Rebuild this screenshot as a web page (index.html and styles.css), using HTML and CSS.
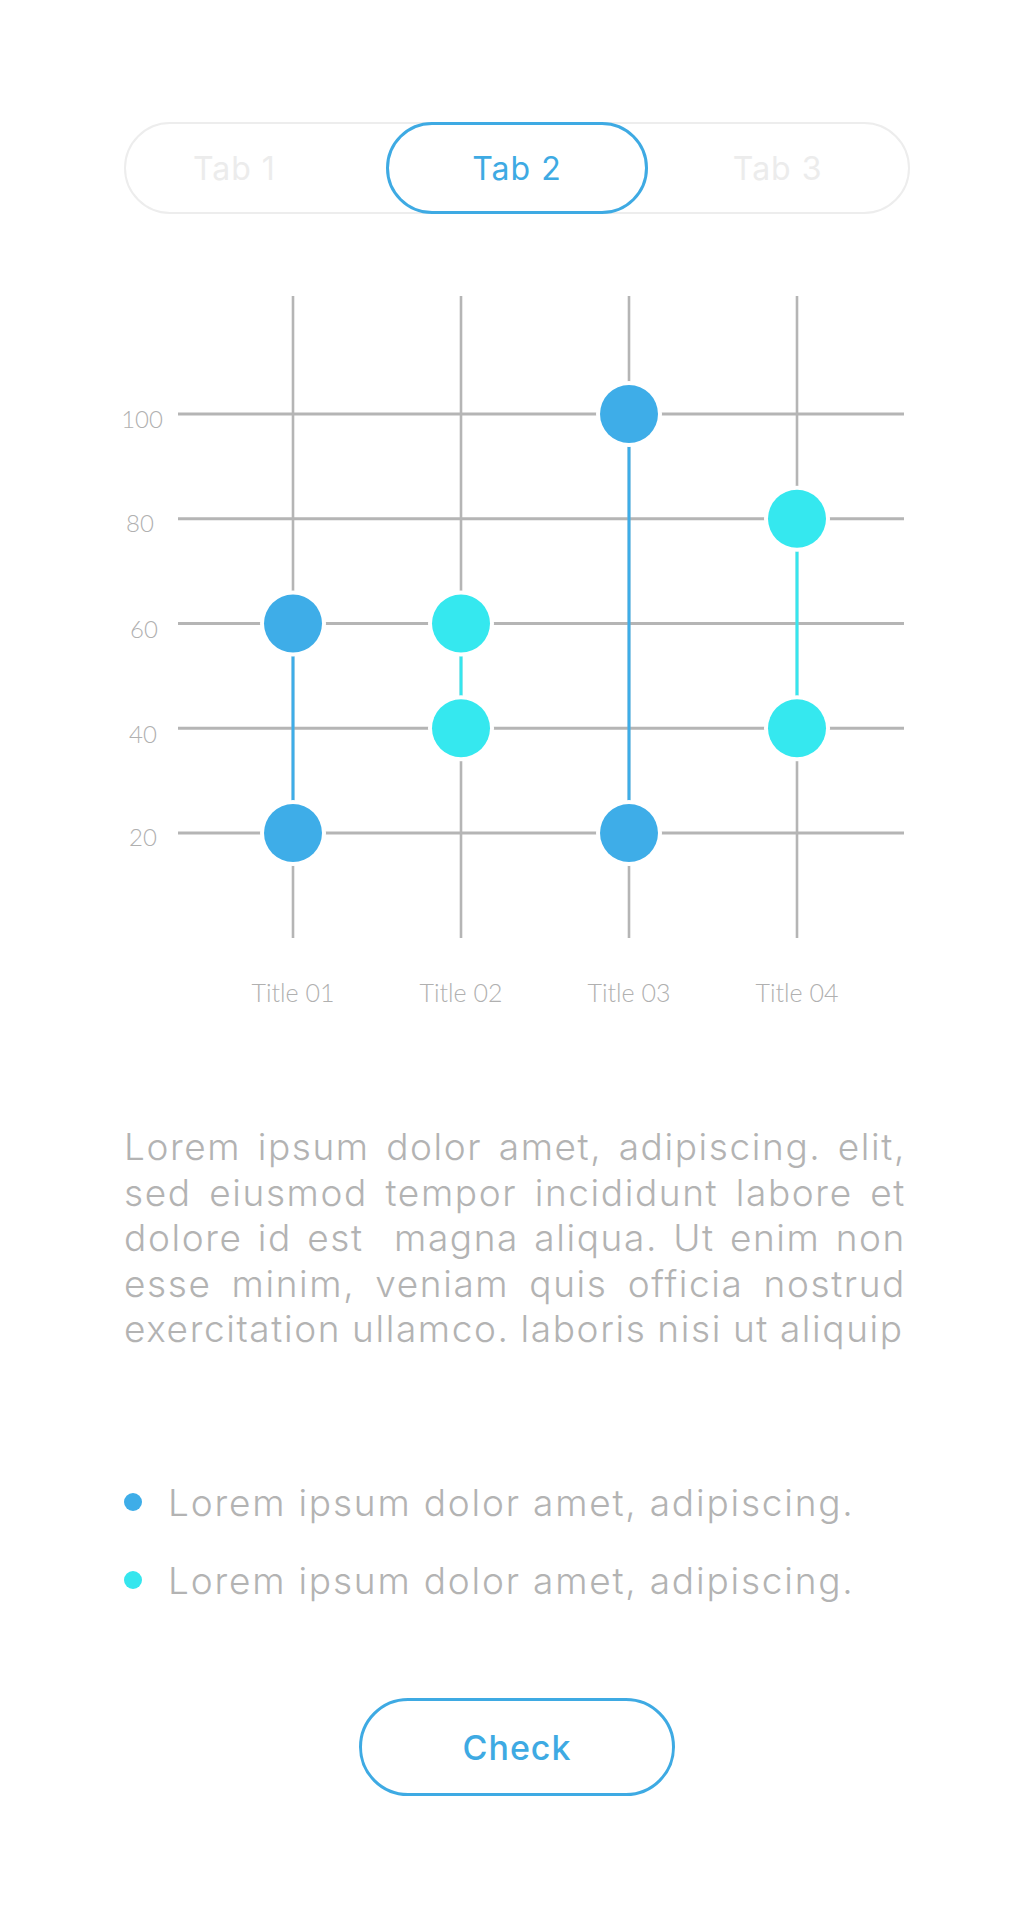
FILE: index.html
```html
<!DOCTYPE html>
<html lang="en">
<head>
<meta charset="utf-8">
<title>Tabs chart</title>
<link rel="stylesheet" href="styles.css">
</head>
<body>
<main class="screen">
  <nav class="tabs">
    <button class="tab tab--first">Tab 1</button>
    <button class="tab tab--active">Tab 2</button>
    <button class="tab">Tab 3</button>
  </nav>

  <svg class="chart" width="786" height="740" viewBox="0 0 786 740">
    <!-- horizontal grid lines -->
    <g class="grid-h">
      <line x1="54" y1="134" x2="780" y2="134"/>
      <line x1="54" y1="238.75" x2="780" y2="238.75"/>
      <line x1="54" y1="343.5" x2="780" y2="343.5"/>
      <line x1="54" y1="448.25" x2="780" y2="448.25"/>
      <line x1="54" y1="553" x2="780" y2="553"/>
    </g>
    <!-- vertical grid lines -->
    <g class="grid-v">
      <line x1="169" y1="16" x2="169" y2="658"/>
      <line x1="337" y1="16" x2="337" y2="658"/>
      <line x1="505" y1="16" x2="505" y2="658"/>
      <line x1="673" y1="16" x2="673" y2="658"/>
    </g>
    <!-- y axis -->
    <g class="axis-y">
      <text x="18" y="148">100</text>
      <text x="16" y="252">80</text>
      <text x="20" y="358">60</text>
      <text x="19" y="463">40</text>
      <text x="19" y="566">20</text>
    </g>
    <!-- x axis -->
    <g class="axis-x">
      <text x="169" y="722">Title 01</text>
      <text x="337" y="722">Title 02</text>
      <text x="505" y="722">Title 03</text>
      <text x="673" y="722">Title 04</text>
    </g>
    <!-- ranges -->
    <g class="range range--blue">
      <line x1="169" y1="343.5" x2="169" y2="553"/>
      <line x1="505" y1="134" x2="505" y2="553"/>
    </g>
    <g class="range range--cyan">
      <line x1="337" y1="343.5" x2="337" y2="448.25"/>
      <line x1="673" y1="238.75" x2="673" y2="448.25"/>
    </g>
    <!-- points -->
    <g class="halo">
      <circle cx="169" cy="343.5" r="33"/>
      <circle cx="169" cy="553" r="33"/>
      <circle cx="337" cy="343.5" r="33"/>
      <circle cx="337" cy="448.25" r="33"/>
      <circle cx="505" cy="134" r="33"/>
      <circle cx="505" cy="553" r="33"/>
      <circle cx="673" cy="238.75" r="33"/>
      <circle cx="673" cy="448.25" r="33"/>
    </g>
    <g class="dot dot--blue">
      <circle cx="169" cy="343.5" r="29"/>
      <circle cx="169" cy="553" r="29"/>
      <circle cx="505" cy="134" r="29"/>
      <circle cx="505" cy="553" r="29"/>
    </g>
    <g class="dot dot--cyan">
      <circle cx="337" cy="343.5" r="29"/>
      <circle cx="337" cy="448.25" r="29"/>
      <circle cx="673" cy="238.75" r="29"/>
      <circle cx="673" cy="448.25" r="29"/>
    </g>
  </svg>

  <p class="copy">Lorem ipsum dolor amet, adipiscing. elit, sed eiusmod tempor incididunt labore et dolore id est &nbsp;magna aliqua. Ut enim non esse minim, veniam quis officia nostrud exercitation ullamco. laboris nisi ut aliquip</p>

  <ul class="legend">
    <li class="legend__item"><span class="legend__dot legend__dot--blue"></span>Lorem ipsum dolor amet, adipiscing.</li>
    <li class="legend__item"><span class="legend__dot legend__dot--cyan"></span>Lorem ipsum dolor amet, adipiscing.</li>
  </ul>

  <div class="actions">
    <button class="check">Check</button>
  </div>
</main>
</body>
</html>
```

FILE: styles.css
```css
* {
  box-sizing: border-box;
}

html, body {
  margin: 0;
  background: #ffffff;
}

body {
  font-family: "Inter", "Open Sans", sans-serif;
  color: #b3b3b3;
}

.screen {
  width: 1034px;
  min-height: 1920px;
  padding: 122px 124px 0;
  display: flex;
  flex-direction: column;
}

/* segmented tabs */
.tabs {
  display: grid;
  grid-template-columns: repeat(3, 1fr);
  height: 92px;
  border: 2px solid #ededed;
  border-radius: 46px;
}

.tab {
  font: inherit;
  font-size: 32px;
  font-weight: 400;
  letter-spacing: 1px;
  color: #ececec;
  background: none;
  border: 0;
  padding: 0;
  cursor: pointer;
}

.tab--first {
  padding-right: 44px;
}

.tab--active {
  margin: -2px -1px;
  border: 3px solid #3eaae3;
  border-radius: 46px;
  color: #3eaae3;
}

/* dumbbell chart */
.chart {
  display: block;
  margin-top: 66px;
  overflow: visible;
}

.grid-h line {
  stroke: #b5b5b5;
  stroke-width: 3;
}

.grid-v line {
  stroke: #b5b5b5;
  stroke-width: 2.6;
}

.axis-y text,
.axis-x text {
  font-family: "Lato", "Open Sans", sans-serif;
  font-weight: 300;
  fill: #b0b0b0;
  text-anchor: middle;
}

.axis-y text {
  font-size: 24px;
}

.axis-x text {
  font-size: 25px;
}

.range line {
  stroke-width: 3;
}

.range--blue line {
  stroke: #3eade8;
}

.range--cyan line {
  stroke: #35e6ee;
}

.halo circle {
  fill: #ffffff;
}

.dot--blue circle {
  fill: #3eade8;
}

.dot--cyan circle {
  fill: #35e8ef;
}

/* body copy */
.copy {
  margin: 104px 0 0;
  width: 782px;
  font-size: 37px;
  font-weight: 300;
  letter-spacing: 1.6px;
  word-spacing: -1px;
  line-height: 45.5px;
  text-align: justify;
  color: #b3b3b3;
}

/* legend */
.legend {
  list-style: none;
  margin: 128px 0 0;
  padding: 0;
  display: flex;
  flex-direction: column;
  gap: 32.5px;
}

.legend__item {
  display: flex;
  align-items: center;
  gap: 26px;
  font-size: 37px;
  font-weight: 300;
  letter-spacing: 1.8px;
  line-height: 45.5px;
  color: #b3b3b3;
}

.legend__dot {
  width: 18px;
  height: 18px;
  border-radius: 50%;
  flex: none;
}

.legend__dot--blue {
  background: #3eade8;
}

.legend__dot--cyan {
  background: #35e6ee;
}

/* action */
.actions {
  display: flex;
  justify-content: center;
  margin-top: 95px;
}

.check {
  width: 316px;
  height: 98px;
  border: 3px solid #3eaae3;
  border-radius: 49px;
  background: #ffffff;
  font: inherit;
  font-size: 34px;
  font-weight: 500;
  letter-spacing: 1px;
  color: #3eaae3;
  cursor: pointer;
}
```
